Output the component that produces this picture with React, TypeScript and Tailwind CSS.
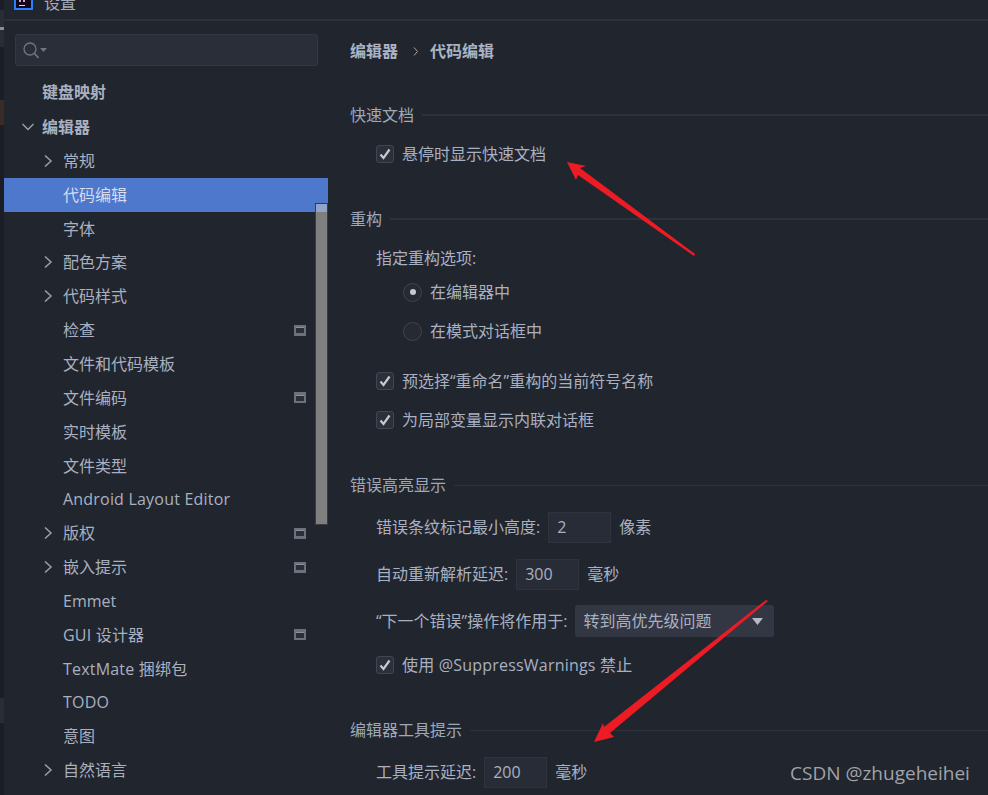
import type { ReactNode } from "react";

const cjk = "font-['Open_Sans','Noto_Sans_CJK_SC',sans-serif]";

const navItems = [
  { label: "常规", arrow: true },
  { label: "代码编辑", selected: true },
  { label: "字体" },
  { label: "配色方案", arrow: true },
  { label: "代码样式", arrow: true },
  { label: "检查", badge: true },
  { label: "文件和代码模板" },
  { label: "文件编码", badge: true },
  { label: "实时模板" },
  { label: "文件类型" },
  { label: "Android Layout Editor", latin: true },
  { label: "版权", arrow: true, badge: true },
  { label: "嵌入提示", arrow: true, badge: true },
  { label: "Emmet" },
  { label: "GUI 设计器", badge: true, latin: true },
  { label: "TextMate 捆绑包", latin: true },
  { label: "TODO", latin: true },
  { label: "意图" },
  { label: "自然语言", arrow: true },
];

function Chevron({ down }: { down?: boolean }) {
  return (
    <svg width="12" height="12" viewBox="0 0 12 12" fill="none" stroke="#9a9fa8" strokeWidth="1.5">
      {down ? <path d="M0.5 3l5.5 5.5L11.5 3" /> : <path d="M2 0.5L8 6l-6 5.5" />}
    </svg>
  );
}

function ProjectBadge() {
  return (
    <span className="flex h-[11px] w-[12px] items-center justify-center bg-[#6b727e]">
      <span className="h-[6px] w-[8px] border-t border-[#8b919b] bg-[#2b2f38]" />
    </span>
  );
}

function NavRow({ label, arrow, badge, selected, latin }: { label: string; arrow?: boolean; badge?: boolean; selected?: boolean; latin?: boolean }) {
  return (
    <div className={`flex h-[33.85px] items-center pr-[22px] ${selected ? "bg-[#4d78cc] text-[#d5dcec]" : ""}`}>
      <span className="flex w-[59px] justify-end pr-[8px]">{arrow && <Chevron />}</span>
      <span className={`flex-1 ${latin ? "tracking-[0.2px]" : ""}`}>{label}</span>
      {badge && <ProjectBadge />}
    </div>
  );
}

function Section({ title, thick, top, children }: { title: string; thick?: boolean; top: string; children: ReactNode }) {
  return (
    <div className={top}>
      <div className="flex h-8 items-center gap-2">
        <span className="text-[#9fa8b8]">{title}</span>
        <span className={`flex-1 bg-[#2e323b] ${thick ? "h-[2px]" : "h-px"}`} />
      </div>
      {children}
    </div>
  );
}

function Check({ label, className }: { label: string; className: string }) {
  return (
    <div className={`flex h-8 items-center gap-[8px] pl-[26px] ${className}`}>
      <span className="flex h-[18px] w-[18px] items-center justify-center rounded-[3px] border border-[#404653] bg-[#2c303a]">
        <svg width="12" height="12" viewBox="0 0 12 12" fill="none" stroke="#c6c9cf" strokeWidth="2.2">
          <path d="M1.5 6.5l3 3.5 6-8.5" />
        </svg>
      </span>
      <span>{label}</span>
    </div>
  );
}

function Radio({ label, on, className }: { label: string; on?: boolean; className: string }) {
  return (
    <div className={`flex h-8 items-center gap-[8px] pl-[53px] ${className}`}>
      <span className="flex h-[19px] w-[19px] items-center justify-center rounded-full border border-[#3e4450] bg-[#262a33]">
        {on && <span className="h-[6px] w-[6px] rounded-full bg-[#c6c9cf]" />}
      </span>
      <span>{label}</span>
    </div>
  );
}

function NumberRow({ label, value, unit, className }: { label: string; value: string; unit: string; className: string }) {
  return (
    <div className={`flex h-8 items-center pl-[26px] ${className}`}>
      <span>{label}</span>
      <span className="ml-[8px] flex h-[31px] w-[63px] items-center border border-[#2f333d] bg-[#282c36] pl-[8px]">{value}</span>
      <span className="ml-[8px]">{unit}</span>
    </div>
  );
}

export default function App() {
  return (
    <div className={`relative flex h-[795px] w-[988px] overflow-hidden bg-[#21252e] text-[16px] leading-none text-[#a9b1c1] ${cjk}`}>
      {/* window behind the dialog */}
      <div className="flex w-1 shrink-0 flex-col bg-[#1b1e25]">
        <div className="mt-[10px] flex h-[37px] items-center bg-[#2a2d35]">
          <span className="h-[3px] w-full bg-[#8a8d92]" />
        </div>
        <div className="mt-[53px] h-[25px] bg-[#3a2c24]" />
        <div className="mt-[573px] h-[25px] bg-[#2a2d35]" />
      </div>

      <div className="flex min-w-0 flex-1 flex-col">
        <div className="flex h-[19px] shrink-0 items-end overflow-hidden pl-[10px]">
          <svg width="19" height="19" viewBox="0 0 19 19" className="mb-[9px] shrink-0">
            <rect width="19" height="19" fill="#2b7fff" />
            <rect x="2" y="2" width="15" height="15" fill="#12061c" />
            <rect x="5" y="9" width="2" height="2" fill="#e8a0c8" />
            <rect x="9" y="9" width="2" height="2" fill="#e8a0c8" />
            <rect x="5" y="14" width="6" height="1" fill="#d8d8e0" />
          </svg>
          <span className="mb-[8px] ml-[11px] text-[#a4abb8]">设置</span>
        </div>
        <div className="h-[2px] shrink-0 bg-[#2d313a]" />

        <div className="flex min-h-0 flex-1">
          {/* sidebar */}
          <div className="relative w-[324px] shrink-0">
            <div className="ml-[11px] mt-[13px] flex h-[32px] w-[303px] items-center gap-[1px] rounded-[3px] border border-[#333843] bg-[#2a2e38] pl-[7px]">
              <svg width="16" height="17" viewBox="0 0 16 17" fill="none" stroke="#6f7681" strokeWidth="1.3">
                <circle cx="7" cy="7" r="6" />
                <path d="M11.5 11.5l4 4.5" strokeWidth="1.8" />
              </svg>
              <svg width="7" height="4" viewBox="0 0 7 4" className="mb-[1px]">
                <path d="M0 0h7L3.5 4z" fill="#6f7681" />
              </svg>
            </div>
            <div className="mt-[9px] flex h-[34px] items-center pl-[38px] font-semibold">键盘映射</div>
            <div className="mt-[1px] flex h-[34px] items-center font-semibold">
              <span className="flex w-[38px] justify-end pr-[8px]">
                <Chevron down />
              </span>
              编辑器
            </div>
            {navItems.map((item) => (
              <NavRow key={item.label} {...item} />
            ))}
            {/* scrollbar thumb */}
            <div className="absolute left-[311px] top-[182px] h-[322px] w-[13px] border border-[#393c44] bg-[#cecac3]/55" />
          </div>

          {/* settings panel */}
          <div className="min-w-0 flex-1 pl-[22px] pt-[14px]">
            <div className="flex h-8 items-center font-semibold text-[#abb3c3]">
              <span>编辑器</span>
              <svg width="6" height="9" viewBox="0 0 6 9" fill="none" stroke="#a2a8b3" className="ml-[15px] mr-[11px]">
                <path d="M1 0.5l3.5 4L1 8.5" />
              </svg>
              <span>代码编辑</span>
            </div>

            <Section title="快速文档" thick top="mt-[32px]">
              <Check label="悬停时显示快速文档" className="mt-[7px]" />
            </Section>

            <Section title="重构" thick top="mt-[33px]">
              <div className="mt-[7px] flex h-8 items-center pl-[26px]">指定重构选项:</div>
              <Radio label="在编辑器中" on className="mt-[2px]" />
              <Radio label="在模式对话框中" className="mt-[7px]" />
              <Check label="预选择“重命名”重构的当前符号名称" className="mt-[18px]" />
              <Check label="为局部变量显示内联对话框" className="mt-[7px]" />
            </Section>

            <Section title="错误高亮显示" top="mt-[33px]">
              <NumberRow label="错误条纹标记最小高度:" value="2" unit="像素" className="mt-[10px]" />
              <NumberRow label="自动重新解析延迟:" value="300" unit="毫秒" className="mt-[15px]" />
              <div className="mt-[15px] flex h-8 items-center pl-[26px]">
                <span>“下一个错误”操作将作用于:</span>
                <span className="ml-[8px] flex h-[32px] w-[199px] items-center justify-between rounded-[3px] bg-[#333743] pl-[8px] pr-[11px]">
                  转到高优先级问题
                  <svg width="11" height="7" viewBox="0 0 11 7">
                    <path d="M0 0h11L5.5 7z" fill="#b4b9c2" />
                  </svg>
                </span>
              </div>
              <Check label="使用 @SuppressWarnings 禁止" className="mt-[12px] tracking-[0.2px]" />
            </Section>

            <Section title="编辑器工具提示" top="mt-[33px]">
              <NumberRow label="工具提示延迟:" value="200" unit="毫秒" className="mt-[10px]" />
            </Section>
          </div>
        </div>
      </div>

      {/* red annotation arrows */}
      <svg width="988" height="795" viewBox="0 0 988 795" className="pointer-events-none absolute left-0 top-0">
        <polygon points="567,162 586,166 580,168 695,254 694,256 578,175 576,180" fill="#ed1c24" />
        <polygon points="594,742 603,723 604,727 766,600 768,601 610,733 614,737" fill="#ed1c24" />
      </svg>

      <span className="absolute left-[790px] top-[761px] font-['Open_Sans',sans-serif] text-[19px] leading-[24px] text-[#a0a3a8]">
        CSDN @zhugeheihei
      </span>
    </div>
  );
}
